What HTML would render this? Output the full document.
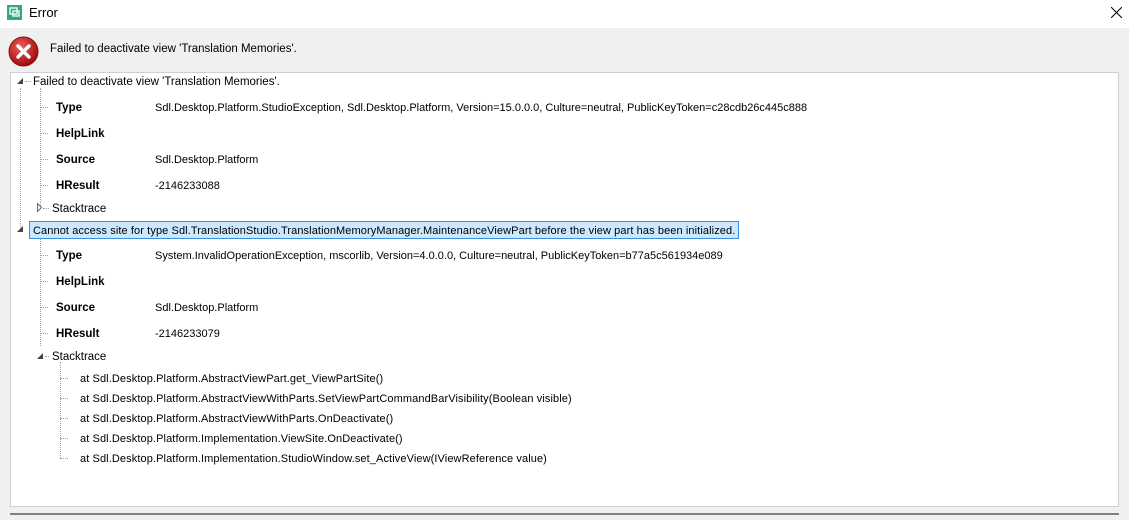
<!DOCTYPE html>
<html><head><style>
body{margin:0;width:1129px;height:520px;background:#f0f0f0;font-family:"Liberation Sans",sans-serif;font-size:11px;color:#000;position:relative;overflow:hidden}
.a{position:absolute;white-space:nowrap;line-height:14px;margin-top:1px}
.b{font-weight:bold;font-size:11.5px}
.h{position:absolute;border-top:1px dotted #a0a0a0;height:0}
.v{position:absolute;border-left:1px dotted #a0a0a0;width:0}
.s{font-size:11px;letter-spacing:0.1px}
.m{font-size:11.5px}
</style></head><body>
<div style="position:absolute;left:0;top:0;width:1129px;height:28px;background:#fff"></div>
<svg style="position:absolute;left:7px;top:5px" width="15" height="15"><rect width="15" height="15" fill="#2eaa8a"/><rect x="3" y="3" width="7" height="6" fill="none" stroke="#fff" stroke-width="1.3"/><rect x="6" y="6" width="6" height="5" fill="none" stroke="#fff" stroke-width="1.3"/></svg>
<div class="a" style="left:29px;top:5px;font-size:13px">Error</div>
<svg style="position:absolute;left:1111px;top:7px" width="11" height="11"><path d="M0 0L11 11M11 0L0 11" stroke="#000" stroke-width="1"/></svg>
<svg style="position:absolute;left:8px;top:36px" width="31" height="31"><defs><radialGradient id="g" cx="40%" cy="35%" r="65%"><stop offset="0" stop-color="#f06060"/><stop offset="1" stop-color="#a00a0a"/></radialGradient></defs><circle cx="15.5" cy="15.5" r="14.5" fill="url(#g)" stroke="#8a1010"/><path d="M10 10L21 21M21 10L10 21" stroke="#fff" stroke-width="3.4" stroke-linecap="round"/></svg>
<div class="a m" style="left:50px;top:41px">Failed to deactivate view 'Translation Memories'.</div>
<div style="position:absolute;left:10px;top:72px;width:1107px;height:433px;background:#fff;border:1px solid #c8d0d8"></div>
<div style="position:absolute;left:10px;top:513px;width:1109px;height:2px;background:#808080"></div>
<div class="v" style="left:20px;top:88px;height:142px"></div>
<div class="h" style="left:25px;top:81px;width:6px"></div>
<div class="v" style="left:40px;top:88px;height:120px"></div>
<div class="h" style="left:40px;top:107px;width:8px"></div>
<div class="h" style="left:40px;top:133px;width:8px"></div>
<div class="h" style="left:40px;top:159px;width:8px"></div>
<div class="h" style="left:40px;top:185px;width:8px"></div>
<div class="h" style="left:43px;top:208px;width:6px"></div>
<div class="v" style="left:40px;top:236px;height:110px"></div>
<div class="h" style="left:40px;top:255px;width:8px"></div>
<div class="h" style="left:40px;top:281px;width:8px"></div>
<div class="h" style="left:40px;top:307px;width:8px"></div>
<div class="h" style="left:40px;top:333px;width:8px"></div>
<div class="h" style="left:45px;top:356px;width:4px"></div>
<div class="v" style="left:60px;top:362px;height:96px"></div>
<div class="h" style="left:60px;top:378px;width:8px"></div>
<div class="h" style="left:60px;top:398px;width:8px"></div>
<div class="h" style="left:60px;top:418px;width:8px"></div>
<div class="h" style="left:60px;top:438px;width:8px"></div>
<div class="h" style="left:60px;top:458px;width:8px"></div>
<svg style="position:absolute;left:17px;top:77px" width="8" height="8"><path d="M6 1L6 7L0 7Z" fill="#444"/></svg>
<svg style="position:absolute;left:17px;top:225px" width="8" height="8"><path d="M6 1L6 7L0 7Z" fill="#444"/></svg>
<svg style="position:absolute;left:37px;top:352px" width="8" height="8"><path d="M6 1L6 7L0 7Z" fill="#444"/></svg>
<svg style="position:absolute;left:37px;top:203px" width="8" height="10"><path d="M0.5 0.5L4.5 4.5L0.5 8.5Z" fill="#fff" stroke="#666"/></svg>
<div class="a m" style="left:33px;top:74px">Failed to deactivate view 'Translation Memories'.</div>
<div class="a b" style="left:56px;top:100px">Type</div>
<div class="a" style="left:155px;top:100px">Sdl.Desktop.Platform.StudioException, Sdl.Desktop.Platform, Version=15.0.0.0, Culture=neutral, PublicKeyToken=c28cdb26c445c888</div>
<div class="a b" style="left:56px;top:126px">HelpLink</div>
<div class="a b" style="left:56px;top:152px">Source</div>
<div class="a" style="left:155px;top:152px">Sdl.Desktop.Platform</div>
<div class="a b" style="left:56px;top:178px">HResult</div>
<div class="a" style="left:155px;top:178px">-2146233088</div>
<div class="a m" style="left:52px;top:201px">Stacktrace</div>
<div style="position:absolute;left:29px;top:221px;width:708px;height:16px;background:#cce8ff;border:1px solid #3c8fd8"></div>
<div class="a" style="left:33px;top:223px;letter-spacing:0.1px">Cannot access site for type Sdl.TranslationStudio.TranslationMemoryManager.MaintenanceViewPart before the view part has been initialized.</div>
<div class="a b" style="left:56px;top:248px">Type</div>
<div class="a" style="left:155px;top:248px">System.InvalidOperationException, mscorlib, Version=4.0.0.0, Culture=neutral, PublicKeyToken=b77a5c561934e089</div>
<div class="a b" style="left:56px;top:274px">HelpLink</div>
<div class="a b" style="left:56px;top:300px">Source</div>
<div class="a" style="left:155px;top:300px">Sdl.Desktop.Platform</div>
<div class="a b" style="left:56px;top:326px">HResult</div>
<div class="a" style="left:155px;top:326px">-2146233079</div>
<div class="a m" style="left:52px;top:349px">Stacktrace</div>
<div class="a s" style="left:80px;top:371px">at Sdl.Desktop.Platform.AbstractViewPart.get_ViewPartSite()</div>
<div class="a s" style="left:80px;top:391px">at Sdl.Desktop.Platform.AbstractViewWithParts.SetViewPartCommandBarVisibility(Boolean visible)</div>
<div class="a s" style="left:80px;top:411px">at Sdl.Desktop.Platform.AbstractViewWithParts.OnDeactivate()</div>
<div class="a s" style="left:80px;top:431px">at Sdl.Desktop.Platform.Implementation.ViewSite.OnDeactivate()</div>
<div class="a s" style="left:80px;top:451px">at Sdl.Desktop.Platform.Implementation.StudioWindow.set_ActiveView(IViewReference value)</div>
</body></html>
